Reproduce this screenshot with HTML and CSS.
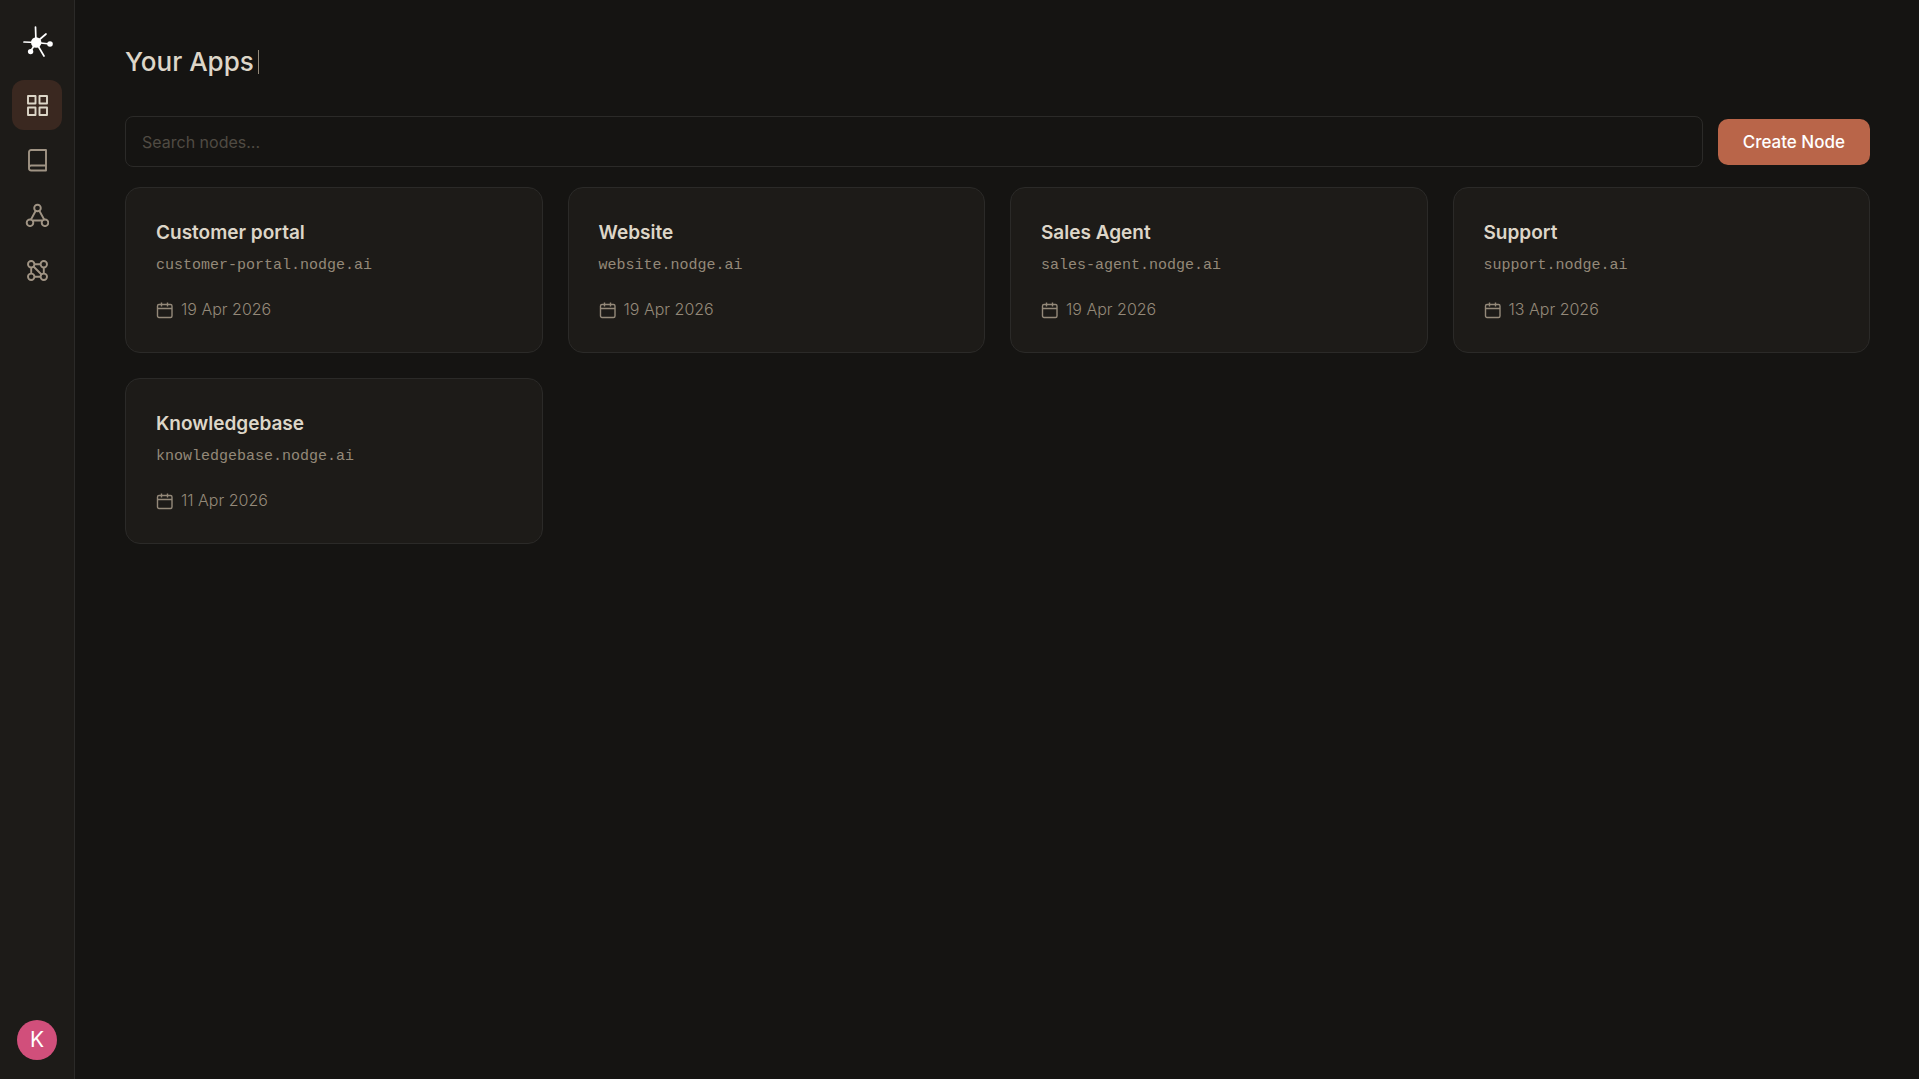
FILE: index.html
```html
<!DOCTYPE html>
<html lang="en">
<head>
<meta charset="utf-8">
<meta name="viewport" content="width=device-width, initial-scale=1">
<title>Your Apps</title>
<link rel="stylesheet" href="styles.css">
</head>
<body>
<svg class="defs" aria-hidden="true">
  <symbol id="calendar" viewBox="0 0 18 18">
    <path d="M3 3.500h11.500a1.500 1.500 0 0 1 1.500 1.500v10a1.500 1.500 0 0 1-1.500 1.500h-11.500a1.500 1.500 0 0 1-1.500-1.500v-10a1.500 1.500 0 0 1 1.500-1.500zM1.500 7.500h14.500M5.500 1.500v4M11.500 1.500v4"/>
  </symbol>
</svg>
<div class="app">
  <aside class="sidebar">
    <a class="logo" href="#" aria-label="Home">
      <svg viewBox="0 0 32 32" width="32" height="32">
        <g stroke="#fff" stroke-width="1.700" stroke-linecap="round">
          <path d="M15 17.500L14.500 2M15 17.500L25 9M15 17.500L3 17M15 17.500L29 19M15 17.500L23 31M15 17.500L9.500 26.500"/>
        </g>
        <g fill="#fff"><circle cx="15.200" cy="17.500" r="5.200"/><circle cx="29" cy="19" r="2.800"/><circle cx="9.600" cy="26.600" r="2.700"/></g>
      </svg>
    </a>
    <nav class="nav">
      <a class="nav-link active" href="#" aria-label="Apps">
        <svg viewBox="0 0 24 24"><path d="M3 3h7.500v7.500H3zM14.500 3H22v7.500h-7.500zM3 14.500h7.500V22H3zM14.500 14.500H22V22h-7.500z"/></svg>
      </a>
      <a class="nav-link" href="#" aria-label="Docs">
        <svg viewBox="0 0 24 24"><path d="M21 17.500H6.200A2.200 2.200 0 0 0 4 19.700M21 2v20.500H6.200A2.200 2.200 0 0 1 4 20.300v-16A2.200 2.200 0 0 1 6.200 2z"/></svg>
      </a>
      <a class="nav-link" href="#" aria-label="Graph">
        <svg viewBox="0 0 24 24"><circle cx="12.500" cy="5" r="3.300"/><circle cx="5" cy="19.800" r="3.300"/><circle cx="20" cy="19.800" r="3.300"/><path d="M10.700 7.700L6 16.500M14.300 7.700l5 9M8 17.500h9"/></svg>
      </a>
      <a class="nav-link" href="#" aria-label="Integrations">
        <svg viewBox="0 0 24 24"><circle cx="6.200" cy="6.200" r="3.200"/><circle cx="18.800" cy="6.200" r="3.200"/><circle cx="6.200" cy="18.800" r="3.200"/><circle cx="18.800" cy="18.800" r="3.200"/><path d="M9.400 6.200h6.200M9.400 18.800h6.200M6.200 9.400v6.200M18.800 9.400v6.200M8.500 8.500l8 8"/></svg>
      </a>
    </nav>
    <button class="avatar" type="button" aria-label="Account">K</button>
  </aside>
  <main class="main">
    <h1 class="title">Your Apps<span class="caret"></span></h1>
    <form class="toolbar">
      <input class="search" type="text" placeholder="Search nodes..." aria-label="Search nodes">
      <button class="create" type="button">Create Node</button>
    </form>
    <section class="cards">
      <a class="card" href="#">
        <h2 class="name">Customer portal</h2>
        <p class="url">customer-portal.nodge.ai</p>
        <p class="date"><svg class="icon"><use href="#calendar"/></svg>19 Apr 2026</p>
      </a>
      <a class="card" href="#">
        <h2 class="name">Website</h2>
        <p class="url">website.nodge.ai</p>
        <p class="date"><svg class="icon"><use href="#calendar"/></svg>19 Apr 2026</p>
      </a>
      <a class="card" href="#">
        <h2 class="name">Sales Agent</h2>
        <p class="url">sales-agent.nodge.ai</p>
        <p class="date"><svg class="icon"><use href="#calendar"/></svg>19 Apr 2026</p>
      </a>
      <a class="card" href="#">
        <h2 class="name">Support</h2>
        <p class="url">support.nodge.ai</p>
        <p class="date"><svg class="icon"><use href="#calendar"/></svg>13 Apr 2026</p>
      </a>
      <a class="card" href="#">
        <h2 class="name">Knowledgebase</h2>
        <p class="url">knowledgebase.nodge.ai</p>
        <p class="date"><svg class="icon"><use href="#calendar"/></svg>11 Apr 2026</p>
      </a>
    </section>
  </main>
</div>
</body>
</html>
```
FILE: styles.css
```css
* { box-sizing: border-box; }
body {
  margin: 0;
  background: #151412;
  color: #ddd6c8;
  font-family: Inter, "Liberation Sans", sans-serif;
}
a { color: inherit; text-decoration: none; }
h1, h2, p { margin: 0; }
.defs { display: none; }
.app { display: flex; min-height: 100vh; }

.sidebar {
  display: flex;
  flex-direction: column;
  align-items: center;
  flex: none;
  width: 75px;
  padding: 25px 0 19px;
  background: #1d1b18;
  border-right: 1px solid #2b2a28;
}
.logo { height: 55px; }
.logo svg { display: block; overflow: visible; }
.nav { display: flex; flex-direction: column; gap: 5px; }
.nav-link {
  display: flex;
  align-items: center;
  justify-content: center;
  width: 50px;
  height: 50px;
  border-radius: 12px;
  color: #a09484;
}
.nav-link.active { background: #3a2820; color: #ddd6c8; }
.nav-link svg {
  width: 24px;
  height: 24px;
  fill: none;
  stroke: currentColor;
  stroke-width: 1.9;
  stroke-linejoin: round;
}
.avatar {
  width: 40px;
  height: 40px;
  margin-top: auto;
  padding: 0;
  border: 0;
  border-radius: 50%;
  background: #d14f7b;
  color: #fff;
  font: 400 21px/40px Inter, sans-serif;
}

.main { flex: 1; min-width: 0; padding: 42px 49px 50px 50px; }
.title {
  display: flex;
  align-items: center;
  gap: 4px;
  font-size: 26px;
  font-weight: 500;
  line-height: 40px;
}
.caret { width: 1px; height: 24px; background: #948979; }
.toolbar { display: flex; align-items: center; gap: 15px; margin: 34px 0 20px; }
.search {
  flex: 1;
  min-width: 0;
  height: 51px;
  padding: 1px 16px 0;
  border: 1px solid #2b2a28;
  border-radius: 8px;
  outline: 0;
  background: transparent;
  color: #ddd6c8;
  font: 400 16px/24px Inter, sans-serif;
}
.search::placeholder { color: #504b43; opacity: 1; }
.create {
  height: 46px;
  padding: 1px 25px 0;
  border: 0;
  border-radius: 10px;
  background: #b96549;
  color: #fff;
  font: 500 17px/24px Inter, sans-serif;
}
.cards {
  display: grid;
  grid-template-columns: repeat(auto-fill, minmax(350px, 1fr));
  gap: 25px;
}
.card {
  padding: 30px;
  border: 1px solid #2b2a28;
  border-radius: 15px;
  background: #1d1b18;
}
.name { font-size: 19px; font-weight: 600; line-height: 30px; }
.url {
  margin: 6px 0 19px;
  color: #948979;
  font: 15px/24px "Liberation Mono", monospace;
}
.date {
  display: flex;
  align-items: center;
  gap: 7px;
  color: #948979;
  font-size: 16px;
  font-weight: 300;
  line-height: 25px;
}
.icon { width: 18px; height: 18px; fill: none; stroke: currentColor; stroke-width: 1.4; }
```
